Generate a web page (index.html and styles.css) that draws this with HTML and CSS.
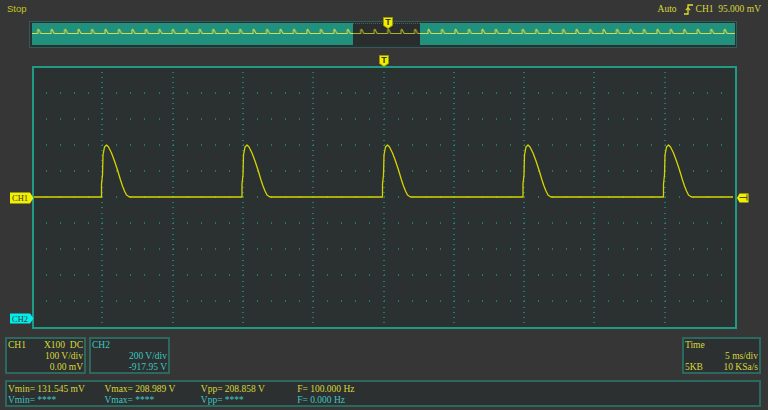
FILE: index.html
```html
<!DOCTYPE html>
<html>
<head>
<meta charset="utf-8">
<link rel="stylesheet" href="styles.css">
</head>
<body>
<div class="scope">
  <header class="topbar">
    <span class="status">Stop</span>
    <span class="trig">Auto<svg class="edge" viewBox="0 0 9 11" width="9" height="11"><path d="M0 10 H4 V1 H9" fill="none" stroke="#dede30" stroke-width="1.3"/><path d="M1.8 6.2 L4 3.8 L6.2 6.2" fill="none" stroke="#dede30" stroke-width="1.2"/></svg>CH1  95.000 mV</span>
  </header>

  <div class="memory">
    <svg class="mem-svg" viewBox="32 23 703 22" width="703" height="22">
      <defs>
        <pattern id="mp" patternUnits="userSpaceOnUse" x="31" y="23" width="13.46" height="22">
          <path d="M0 10.5 H6.7 V7 L7.5 6.3 L9.8 10.5 H13.46" fill="none" stroke="#d4dc4c" stroke-width="1.1"/>
        </pattern>
        <pattern id="mpd" patternUnits="userSpaceOnUse" x="31" y="23" width="13.46" height="22">
          <path d="M0 10.5 H6.7 V7 L7.5 6.3 L9.8 10.5 H13.46" fill="none" stroke="#b0b02a" stroke-width="1.1"/>
        </pattern>
      </defs>
      <rect x="32" y="23" width="703" height="22" fill="#2a2d2d"/>
      <rect x="32" y="23" width="321" height="22" fill="#1f917d"/>
      <rect x="420" y="23" width="315" height="22" fill="#1f917d"/>
      <line x1="353" y1="23.5" x2="420" y2="23.5" stroke="#5a5a5a" stroke-dasharray="1 1"/>
      <rect x="32" y="23" width="321" height="22" fill="url(#mp)"/>
      <rect x="353" y="23" width="67" height="22" fill="url(#mpd)"/>
      <rect x="420" y="23" width="315" height="22" fill="url(#mp)"/>
    </svg>
    <svg class="tmark tmark-mem" viewBox="0 0 10 12" width="10" height="12"><polygon points="0.5,0.5 9.5,0.5 9.5,8.5 5,11.5 0.5,8.5" fill="#f0ee00" stroke="#9c9a00"/><text x="5" y="8.3" text-anchor="middle" class="tglyph">T</text></svg>
  </div>

  <div class="screen">
    <svg class="grid" viewBox="34 68 701 259" width="701" height="259">
      <g stroke="#1d7c6c" fill="none" shape-rendering="crispEdges">
        <path stroke-width="2" stroke-dasharray="1 13.06" d="M32 92.6H736 M32 118.7H736 M32 144.8H736 M32 170.9H736 M32 197H736 M32 223.1H736 M32 249.2H736 M32 275.3H736 M32 301.4H736"/>
        <path stroke-width="2" stroke-dasharray="1 4.22" d="M102.3 66.5V328 M172.6 66.5V328 M242.9 66.5V328 M313.2 66.5V328 M383.5 66.5V328 M453.8 66.5V328 M524.1 66.5V328 M594.4 66.5V328 M664.7 66.5V328"/>
      </g>
      <path fill="none" stroke="#d6d400" stroke-width="1.3" stroke-linejoin="round"
        d="M34 197 H101.5 v-13 l1 -9 l0.5 -20 l1.5 -8 l2 -2 l2 2 l3 6 l3 8 l3 9 l3 10 l2 6 l2 5 l2 4 l3 2
           H242 v-13 l1 -9 l0.5 -20 l1.5 -8 l2 -2 l2 2 l3 6 l3 8 l3 9 l3 10 l2 6 l2 5 l2 4 l3 2
           H382.5 v-13 l1 -9 l0.5 -20 l1.5 -8 l2 -2 l2 2 l3 6 l3 8 l3 9 l3 10 l2 6 l2 5 l2 4 l3 2
           H523 v-13 l1 -9 l0.5 -20 l1.5 -8 l2 -2 l2 2 l3 6 l3 8 l3 9 l3 10 l2 6 l2 5 l2 4 l3 2
           H663.5 v-13 l1 -9 l0.5 -20 l1.5 -8 l2 -2 l2 2 l3 6 l3 8 l3 9 l3 10 l2 6 l2 5 l2 4 l3 2
           H733"/>
    </svg>
    <svg class="tmark tmark-screen" viewBox="0 0 10 12" width="10" height="12"><polygon points="0.5,0.5 9.5,0.5 9.5,8.5 5,11.5 0.5,8.5" fill="#f0ee00" stroke="#9c9a00"/><text x="5" y="8.3" text-anchor="middle" class="tglyph">T</text></svg>
    <svg class="chmark ch1mark" viewBox="0 0 24 12" width="24" height="12"><polygon points="0,0.5 20,0.5 23.5,6 20,11.5 0,11.5" fill="#f2f000"/><text x="2" y="9.2" class="chglyph">CH1</text></svg>
    <svg class="chmark ch2mark" viewBox="0 0 24 11" width="24" height="11"><polygon points="0,0.5 20,0.5 23.5,5.5 20,10.5 0,10.5" fill="#00eeee"/><text x="2" y="8.6" class="chglyph">CH2</text></svg>
    <svg class="refmark" viewBox="0 0 12 10" width="12" height="10"><polygon points="0,5 2.5,0.5 11.5,0.5 11.5,9.5 2.5,9.5" fill="#f2f000"/><path d="M2.5 4.5 H10 M10 1.5 V7.5" stroke="#4a4a1a" stroke-width="1" fill="none"/></svg>
  </div>

  <div class="panels">
    <div class="panel">
      <div class="row"><span>CH1</span><span>X100  DC</span></div>
      <div class="row right">100 V/div</div>
      <div class="row right">0.00 mV</div>
    </div>
    <div class="panel cyan">
      <div class="row"><span>CH2</span></div>
      <div class="row right">200 V/div</div>
      <div class="row right">-917.95 V</div>
    </div>
    <div class="panel time">
      <div class="row"><span>Time</span></div>
      <div class="row right">5 ms/div</div>
      <div class="row"><span>5KB</span><span>10 KSa/s</span></div>
    </div>
  </div>

  <div class="measure">
    <span>Vmin= 131.545 mV</span>
    <span>Vmax= 208.989 V</span>
    <span>Vpp= 208.858 V</span>
    <span>F= 100.000 Hz</span>
    <span class="cyan">Vmin= ****</span>
    <span class="cyan">Vmax= ****</span>
    <span class="cyan">Vpp= ****</span>
    <span class="cyan">F= 0.000 Hz</span>
  </div>
</div>
</body>
</html>
```

FILE: styles.css
```css
html, body {
  margin: 0;
  padding: 0;
}
body {
  background: #363636;
  width: 768px;
  height: 410px;
  overflow: hidden;
  font-family: "Liberation Serif", "Times New Roman", serif;
  font-size: 9.5px;
  color: #d8d83a;
}
.topbar {
  height: 21px;
  display: flex;
  justify-content: space-between;
  align-items: flex-start;
  padding: 0 7px;
  line-height: 18px;
}
.status {
  font-family: "Liberation Sans", Arial, sans-serif;
  font-size: 9.5px;
  color: #c6c41e;
}
.trig {
  display: flex;
  align-items: center;
  white-space: pre;
}
.edge {
  display: block;
  margin: 0 3px 0 7px;
}
.memory {
  position: relative;
  box-sizing: border-box;
  margin-left: 29px;
  width: 708px;
  height: 27px;
  border: 1px solid #2d5d58;
  padding: 1px 1px 2px 2px;
  background: #2c2f2f;
}
.mem-svg {
  display: block;
}
.tmark {
  position: absolute;
  display: block;
}
.tmark-mem {
  left: 353px;
  top: -5px;
}
.tmark-screen {
  left: 345px;
  top: -13px;
}
.tglyph {
  font-family: "Liberation Sans", Arial, sans-serif;
  font-size: 9px;
  font-weight: bold;
  fill: #3a3a10;
}
.screen {
  position: relative;
  box-sizing: border-box;
  margin: 18px 0 0 32px;
  width: 705px;
  height: 263px;
  border: 2px solid #1e9a85;
  background: #2b3030;
}
.grid {
  display: block;
}
.chmark {
  position: absolute;
  display: block;
  left: -24px;
}
.ch1mark {
  top: 124px;
}
.ch2mark {
  top: 245px;
}
.chglyph {
  font-family: "Liberation Serif", serif;
  font-size: 8.5px;
  fill: #3a3a2a;
}
.refmark {
  position: absolute;
  display: block;
  left: 703px;
  top: 125px;
}
.panels {
  display: flex;
  gap: 3px;
  margin: 8px 7px 0 5px;
}
.panel {
  box-sizing: border-box;
  width: 81px;
  height: 37px;
  border: 2px solid #2a6860;
  padding: 1px 1px 0 1px;
  background: #2c3030;
  line-height: 11px;
}
.panel.time {
  margin-left: auto;
  width: 79px;
}
.row {
  display: flex;
  justify-content: space-between;
  white-space: pre;
}
.row.right {
  justify-content: flex-end;
}
.cyan {
  color: #3cc8c2;
}
.measure {
  box-sizing: border-box;
  margin: 6px 7px 0 5px;
  height: 27px;
  border: 2px solid #2a6860;
  padding: 2px 0 0 1px;
  background: #2c3030;
  display: grid;
  grid-template-columns: repeat(4, 96.4px);
  line-height: 11px;
  white-space: pre;
}
```
